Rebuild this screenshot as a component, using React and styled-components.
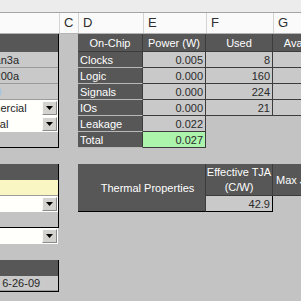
import React from 'react'
import styled, { createGlobalStyle } from 'styled-components'

const Global = createGlobalStyle`
  html, body {
    margin: 0;
    padding: 0;
    background: #c3c3c3;
  }
  body {
    font-family: "Liberation Sans", Arial, sans-serif;
    font-size: 11px;
    overflow: hidden;
  }
`

const Page = styled.div`
  width: 301px;
  height: 301px;
  overflow: hidden;
  background: #c3c3c3;
`

const Ribbon = styled.div`
  height: 12px;
  background: #ececec;
  border-bottom: 1px solid #a4a4a4;
`

const ColHeads = styled.div`
  display: flex;
  height: 20px;
  background: #fafafa;
  border-bottom: 1px solid #b4b4b4;
`

const ColHead = styled.div`
  flex: 0 0 ${p => p.$w}px;
  box-sizing: border-box;
  border-left: ${p => (p.$first ? 'none' : '1px solid #d4d4d4')};
  padding-left: 4px;
  font-size: 13px;
  line-height: 20px;
  color: #2e2e2e;
`

const Body = styled.div`
  display: flex;
  align-items: flex-start;
`

const LeftPane = styled.div`
  flex: 0 0 93px;
  margin-left: -34px;
  display: flex;
  flex-direction: column;
`

const Gutter = styled.div`
  flex: 0 0 19px;
`

const Box = styled.div`
  display: flex;
  flex-direction: column;
  border-right: 1px solid #000;
  border-bottom: 1px solid #000;
`

const DarkBar = styled.div`
  height: ${p => p.$h || 16}px;
  background: #575757;
`

const tones = {
  plain: '#c9c9c9',
  yellow: '#faf6c4',
  blank: 'transparent'
}

/* a settings row: a value column that ends at x=21, then the free part of the box */
const InfoCell = styled.div`
  height: ${p => p.$h || 16}px;
  box-sizing: border-box;
  display: grid;
  grid-template-columns: 55px 1fr;
  align-items: center;
  background: ${p => tones[p.$tone || 'plain']};
  border-bottom: ${p => (p.$tone === 'blank' ? 'none' : '1px solid #9c9c9c')};
  color: #262626;
  white-space: nowrap;
  overflow: hidden;
`

const InfoValue = styled.span`
  text-align: ${p => (p.$left ? 'left' : 'right')};
  padding: 0 2px 0 ${p => (p.$wide ? 4 : 2)}px;
  color: ${p => (p.$link ? '#9cc4ec' : 'inherit')};
  grid-column: ${p => (p.$wide || p.$link ? '1 / span 2' : 'auto')};
  overflow: hidden;
`

const SelectRow = styled.div`
  height: 16px;
  width: 92px;
  box-sizing: border-box;
  display: flex;
  align-items: center;
  padding-left: 2px;
  background: #fffffb;
  color: #1e1e1e;
  white-space: nowrap;
`

const SelectText = styled.span`
  flex: 1;
  overflow: hidden;
`

const DropButton = styled.div`
  flex: 0 0 15px;
  height: 14px;
  box-sizing: border-box;
  margin-right: 1px;
  background: #d4d2cf;
  border: 1px solid;
  border-color: #fbfbfb #8a8a8a #8a8a8a #fbfbfb;
  display: flex;
  align-items: center;
  justify-content: center;
`

const Spacer = styled.div`
  height: 16px;
`

const Table = styled.div`
  display: grid;
  grid-template-columns: ${p => p.$cols};
  grid-template-rows: ${p => p.$rows};
`

const Cell = styled.div`
  box-sizing: border-box;
  display: flex;
  align-items: center;
  padding: 0 2px;
  white-space: nowrap;
  overflow: hidden;
  grid-row: span ${p => p.$rowSpan || 1};
  grid-column: span ${p => p.$colSpan || 1};
  justify-content: ${p =>
    p.$kind === 'value' ? 'flex-end' : p.$kind === 'label' ? 'flex-start' : 'center'};
  background: ${p =>
    p.$kind === 'empty'
      ? 'transparent'
      : p.$kind === 'value'
        ? p.$green
          ? '#acf4ac'
          : '#c9c9c9'
        : '#575757'};
  color: ${p => (p.$kind === 'value' ? '#2a2a2a' : '#fff')};
  border-right: 1px solid ${p => (p.$kind === 'empty' ? 'transparent' : '#3c3c3c')};
  border-bottom: 1px solid
    ${p => (p.$kind === 'empty' ? 'transparent' : p.$kind === 'label' ? '#b9b9b9' : '#3c3c3c')};
`

const Thermal = styled(Cell)`
  border-bottom-color: #000;
  padding-left: 14px;
`

const TwoLine = styled(Cell)`
  flex-direction: column;
  justify-content: center;
  line-height: 15px;
  text-align: center;
`

const OutlinedValue = styled(Cell)`
  border-bottom-color: #000;
  border-right-color: #000;
`

const LeftHead = styled(Cell)`
  justify-content: flex-start;
  padding-left: 3px;
`

const Arrow = () => (
  <svg width="7" height="4" viewBox="0 0 7 4">
    <path d="M0 0h7L3.5 4z" fill="#000" />
  </svg>
)

const Select = ({ value }) => (
  <SelectRow>
    <SelectText>{value}</SelectText>
    <DropButton>
      <Arrow />
    </DropButton>
  </SelectRow>
)

const usage = [
  { name: 'Clocks', power: '0.005', used: '8' },
  { name: 'Logic', power: '0.000', used: '160' },
  { name: 'Signals', power: '0.000', used: '224' },
  { name: 'IOs', power: '0.000', used: '21' }
]

export default function App() {
  return (
    <Page>
      <Global />
      <Ribbon />
      <ColHeads>
        <ColHead $w={59} $first />
        <ColHead $w={19}>C</ColHead>
        <ColHead $w={65}>D</ColHead>
        <ColHead $w={63}>E</ColHead>
        <ColHead $w={67}>F</ColHead>
        <ColHead $w={67}>G</ColHead>
      </ColHeads>
      <Body>
        <LeftPane>
          <Box>
            <DarkBar $h={18} />
            <InfoCell>
              <InfoValue>Spartan3a</InfoValue>
            </InfoCell>
            <InfoCell>
              <InfoValue>xc3s200a</InfoValue>
            </InfoCell>
            <InfoCell>
              <InfoValue $left $link>fgg400</InfoValue>
            </InfoCell>
            <Select value="Commercial" />
            <Select value="Nominal" />
            <InfoCell $tone="blank" $h={15} />
          </Box>
          <Spacer />
          <Box>
            <DarkBar />
            <InfoCell $tone="yellow" />
            <Select value="" />
            <InfoCell $tone="blank" $h={15} />
          </Box>
          <Select value="" />
          <Spacer />
          <Box>
            <DarkBar />
            <InfoCell $h={15}>
              <InfoValue $left $wide>v11.1 &nbsp;6-26-09</InfoValue>
            </InfoCell>
          </Box>
        </LeftPane>
        <Gutter />
        <div>
          <Table $cols="65px 63px 67px 67px" $rows="18px repeat(6, 16px)">
            <Cell $kind="head">On-Chip</Cell>
            <Cell $kind="head">Power (W)</Cell>
            <Cell $kind="head">Used</Cell>
            <Cell $kind="head">Available</Cell>
            {usage.map(u => (
              <React.Fragment key={u.name}>
                <Cell $kind="label">{u.name}</Cell>
                <Cell $kind="value">{u.power}</Cell>
                <Cell $kind="value">{u.used}</Cell>
                <Cell $kind="value" />
              </React.Fragment>
            ))}
            <Cell $kind="label">Leakage</Cell>
            <Cell $kind="value">0.022</Cell>
            <Cell $kind="empty" />
            <Cell $kind="empty" />
            <Cell $kind="label">Total</Cell>
            <Cell $kind="value" $green>0.027</Cell>
            <Cell $kind="empty" />
            <Cell $kind="empty" />
          </Table>
          <Spacer />
          <Table $cols="128px 67px 67px" $rows="repeat(3, 16px)">
            <Thermal $kind="head" $rowSpan={3}>Thermal Properties</Thermal>
            <TwoLine $kind="head" $rowSpan={2}>
              <span>Effective TJA</span>
              <span>(C/W)</span>
            </TwoLine>
            <LeftHead $kind="head" $rowSpan={2}>Max Junction Temp</LeftHead>
            <OutlinedValue $kind="value">42.9</OutlinedValue>
            <Cell $kind="empty" />
          </Table>
        </div>
      </Body>
    </Page>
  )
}
